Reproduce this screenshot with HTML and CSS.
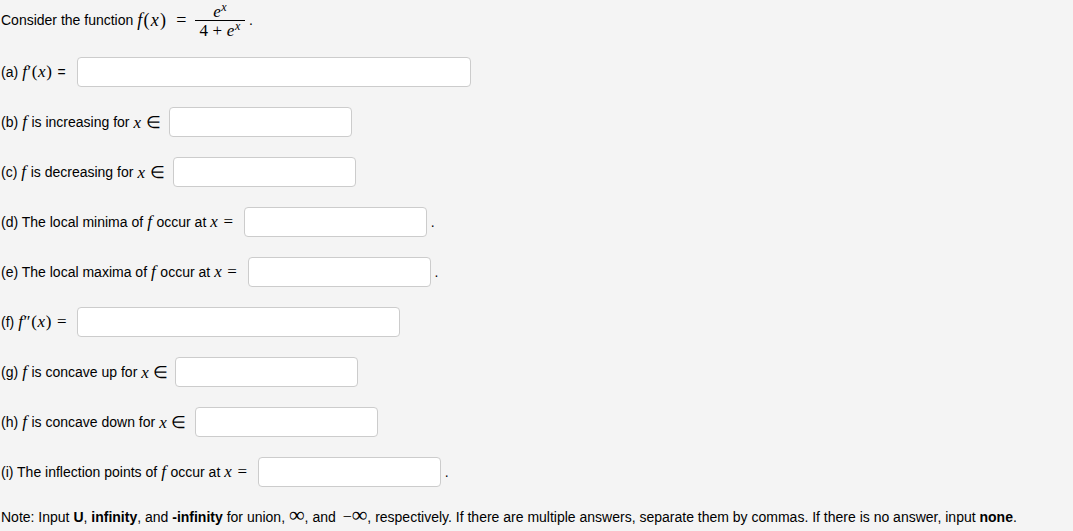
FILE: index.html
```html
<!DOCTYPE html>
<html>
<head>
<meta charset="utf-8">
<link rel="stylesheet" href="styles.css">
</head>
<body>
<div class="page">
  <div class="header">
    <span>Consider the function</span>
    <span class="m mh"><i>f</i>(<i>x</i>)</span>
    <span class="m mh rel">=</span>
    <span class="frac">
      <span class="num m"><i>e</i><sup><i>x</i></sup></span>
      <span class="den m">4<span class="bin">+</span><i>e</i><sup><i>x</i></sup></span>
    </span>
    <span class="dot">.</span>
  </div>
  <div class="rows">
    <div class="row">
      <span>(a)</span><span class="m"><i>f</i>′(<i>x</i>)</span><span class="txt-eq">=</span>
      <input class="box box-a w-a" type="text">
    </div>
    <div class="row">
      <span>(b)</span><span class="m"><i>f</i></span><span>is increasing for</span><span class="m"><i>x</i><span class="rel-in">∈</span></span>
      <input class="box w-s" type="text">
    </div>
    <div class="row">
      <span>(c)</span><span class="m"><i>f</i></span><span>is decreasing for</span><span class="m"><i>x</i><span class="rel-in">∈</span></span>
      <input class="box w-s" type="text">
    </div>
    <div class="row">
      <span>(d) The local minima of</span><span class="m"><i>f</i></span><span>occur at</span><span class="m"><i>x</i><span class="rel">=</span></span>
      <input class="box w-s" type="text"><span class="dot">.</span>
    </div>
    <div class="row">
      <span>(e) The local maxima of</span><span class="m"><i>f</i></span><span>occur at</span><span class="m"><i>x</i><span class="rel">=</span></span>
      <input class="box w-s" type="text"><span class="dot">.</span>
    </div>
    <div class="row">
      <span>(f)</span><span class="m"><i>f</i>″(<i>x</i>)<span class="rel">=</span></span>
      <input class="box w-f" type="text">
    </div>
    <div class="row">
      <span>(g)</span><span class="m"><i>f</i></span><span>is concave up for</span><span class="m"><i>x</i><span class="rel-in">∈</span></span>
      <input class="box box-g w-s" type="text">
    </div>
    <div class="row">
      <span>(h)</span><span class="m"><i>f</i></span><span>is concave down for</span><span class="m"><i>x</i><span class="rel-in">∈</span></span>
      <input class="box w-s" type="text">
    </div>
    <div class="row">
      <span>(i) The inflection points of</span><span class="m"><i>f</i></span><span>occur at</span><span class="m"><i>x</i><span class="rel">=</span></span>
      <input class="box w-s" type="text"><span class="dot">.</span>
    </div>
  </div>
  <p class="note">Note: Input <b>U</b>, <b>infinity</b>, and <b>-infinity</b> for union, <span class="inf">∞</span>, and <span class="minus">−</span><span class="inf">∞</span>, respectively. If there are multiple answers, separate them by commas. If there is no answer, input <b>none</b>.</p>
</div>
</body>
</html>
```

FILE: styles.css
```css
html, body {
  margin: 0;
  padding: 0;
  background: #f4f4f4;
}
body {
  font-family: "Liberation Sans", Arial, sans-serif;
  font-size: 14px;
  color: #000;
}
.page {
  padding-left: 1px;
}
.header {
  height: 40px;
  display: flex;
  align-items: center;
  gap: 4px;
}
.m {
  font-family: "Liberation Serif", "Times New Roman", serif;
  font-size: 17px;
  letter-spacing: 0.6px;
}
.mh {
  font-size: 18px;
  letter-spacing: 1.2px;
}
.m i {
  font-style: italic;
}
.m sup {
  font-size: 12px;
  line-height: 0;
  vertical-align: 6px;
}
.rel {
  display: inline-block;
  margin: 0 4px 0 5px;
}
.rel-in {
  display: inline-block;
  margin: 0 2px 0 4px;
}
.bin {
  display: inline-block;
  margin: 0 4px;
}
.frac {
  display: inline-flex;
  flex-direction: column;
  align-items: center;
  margin-top: 2px;
}
.num {
  line-height: 15px;
  padding: 0 4px 1px;
}
.den {
  line-height: 16px;
  border-top: 1px solid #000;
  padding: 2px 4px 0;
}
.txt-eq {
  margin-left: 1px;
}
.rows {
  display: flex;
  flex-direction: column;
  gap: 20px;
  padding-top: 17px;
}
.row {
  display: flex;
  align-items: center;
  height: 30px;
  gap: 4px;
}
.box {
  box-sizing: border-box;
  height: 30px;
  margin: 0 0 0 2px;
  padding: 0 6px;
  background: #fff;
  border: 1px solid #cccccc;
  border-radius: 4px;
  outline: none;
  font: inherit;
}
.box-a {
  margin-left: 7px;
}
.box-g {
  margin-left: 0;
}
.w-a { width: 394px; }
.w-s { width: 183px; }
.w-f { width: 323px; }
.note {
  margin: 22px 0 0;
  line-height: 16px;
}
.note b {
  font-weight: bold;
}
.inf {
  font-family: "Liberation Serif", serif;
  font-size: 22px;
  line-height: 0;
}
.minus {
  font-family: "Liberation Serif", serif;
  font-size: 16px;
  margin: 0 0 0 3px;
}
```
